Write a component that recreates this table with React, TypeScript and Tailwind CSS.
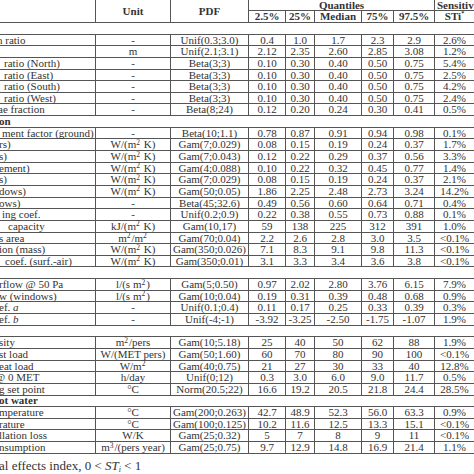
type Row = { label: string; ind: string; unit: string; pdf: string; q: string[]; s: string }
type Group = { title: string; rows: Row[] }

const groups: Group[] = [
  {
    title: '',
    rows: [
      { label: 'n ratio', ind: '-ml-[3px]', unit: '-', pdf: 'Unif(0.3;3.0)', q: ['0.4', '1.0', '1.7', '2.3', '2.9'], s: '2.6%' },
      { label: '', ind: '', unit: 'm', pdf: 'Unif(2.1;3.1)', q: ['2.12', '2.35', '2.60', '2.85', '3.08'], s: '1.2%' },
      { label: 'ratio (North)', ind: 'ml-[4px]', unit: '-', pdf: 'Beta(3;3)', q: ['0.10', '0.30', '0.40', '0.50', '0.75'], s: '5.4%' },
      { label: 'ratio (East)', ind: 'ml-[4px]', unit: '-', pdf: 'Beta(3;3)', q: ['0.10', '0.30', '0.40', '0.50', '0.75'], s: '2.5%' },
      { label: 'ratio (South)', ind: 'ml-[4px]', unit: '-', pdf: 'Beta(3;3)', q: ['0.10', '0.30', '0.40', '0.50', '0.75'], s: '4.2%' },
      { label: 'ratio (West)', ind: 'ml-[4px]', unit: '-', pdf: 'Beta(3;3)', q: ['0.10', '0.30', '0.40', '0.50', '0.75'], s: '2.4%' },
      { label: 'ae fraction', ind: '-ml-[2px]', unit: '-', pdf: 'Beta(8;24)', q: ['0.12', '0.20', '0.24', '0.30', '0.41'], s: '0.5%' },
    ],
  },
  {
    title: 'on',
    rows: [
      { label: 'ment factor (ground)', ind: 'ml-[2px]', unit: '-', pdf: 'Beta(10;1.1)', q: ['0.78', '0.87', '0.91', '0.94', '0.98'], s: '0.1%' },
      { label: 'rs)', ind: '-ml-[1px]', unit: 'W/(m² K)', pdf: 'Gam(7;0.029)', q: ['0.08', '0.15', '0.19', '0.24', '0.37'], s: '1.7%' },
      { label: 's)', ind: '-ml-[1px]', unit: 'W/(m² K)', pdf: 'Gam(7;0.043)', q: ['0.12', '0.22', '0.29', '0.37', '0.56'], s: '3.3%' },
      { label: 'ement)', ind: '-ml-[1px]', unit: 'W/(m² K)', pdf: 'Gam(4;0.088)', q: ['0.10', '0.22', '0.32', '0.45', '0.77'], s: '1.4%' },
      { label: 's)', ind: '-ml-[1px]', unit: 'W/(m² K)', pdf: 'Gam(7;0.029)', q: ['0.08', '0.15', '0.19', '0.24', '0.37'], s: '2.1%' },
      { label: 'dows)', ind: '-ml-[1px]', unit: 'W/(m² K)', pdf: 'Gam(50;0.05)', q: ['1.86', '2.25', '2.48', '2.73', '3.24'], s: '14.2%' },
      { label: 'ows)', ind: '-ml-[1px]', unit: '-', pdf: 'Beta(45;32.6)', q: ['0.49', '0.56', '0.60', '0.64', '0.71'], s: '0.4%' },
      { label: 'ing coef.', ind: 'ml-[2px]', unit: '-', pdf: 'Unif(0.2;0.9)', q: ['0.22', '0.38', '0.55', '0.73', '0.88'], s: '0.1%' },
      { label: 'capacity', ind: 'ml-[8px]', unit: 'kJ/(m² K)', pdf: 'Gam(10,17)', q: ['59', '138', '225', '312', '391'], s: '1.0%' },
      { label: 's area', ind: '-ml-[1px]', unit: 'm²/m²', pdf: 'Gam(70;0.04)', q: ['2.2', '2.6', '2.8', '3.0', '3.5'], s: '<0.1%' },
      { label: 'ion (mass)', ind: '-ml-[1px]', unit: 'W/(m² K)', pdf: 'Gam(350;0.026)', q: ['7.1', '8.3', '9.1', '9.8', '11.3'], s: '<0.1%' },
      { label: 'coef. (surf.-air)', ind: 'ml-[5px]', unit: 'W/(m² K)', pdf: 'Gam(350;0.01)', q: ['3.1', '3.3', '3.4', '3.6', '3.8'], s: '<0.1%' },
    ],
  },
  {
    title: '',
    rows: [
      { label: 'rflow @ 50 Pa', ind: '-ml-[1px]', unit: 'l/(s m²)', pdf: 'Gam(5;0.50)', q: ['0.97', '2.02', '2.80', '3.76', '6.15'], s: '7.9%' },
      { label: 'w (windows)', ind: '-ml-[1px]', unit: 'l/(s m²)', pdf: 'Gam(10;0.04)', q: ['0.19', '0.31', '0.39', '0.48', '0.68'], s: '0.9%' },
      { label: 'ef. ', ind: '-ml-[1px]', unit: '-', pdf: 'Unif(0.1;0.4)', q: ['0.11', '0.17', '0.25', '0.33', '0.39'], s: '0.3%' },
      { label: 'ef. ', ind: '-ml-[1px]', unit: '-', pdf: 'Unif(-4;-1)', q: ['-3.92', '-3.25', '-2.50', '-1.75', '-1.07'], s: '1.9%' },
    ],
  },
  {
    title: '',
    rows: [
      { label: 'sity', ind: '-ml-[1px]', unit: 'm²/pers', pdf: 'Gam(10;5.18)', q: ['25', '40', '50', '62', '88'], s: '1.9%' },
      { label: 'st load', ind: '-ml-[1px]', unit: 'W/(MET pers)', pdf: 'Gam(50;1.60)', q: ['60', '70', '80', '90', '100'], s: '<0.1%' },
      { label: 'eat load', ind: '-ml-[1px]', unit: 'W/m²', pdf: 'Gam(40;0.75)', q: ['21', '27', '30', '33', '40'], s: '12.8%' },
      { label: '@ 0 MET', ind: '-ml-[5px]', unit: 'h/day', pdf: 'Unif(0;12)', q: ['0.3', '3.0', '6.0', '9.0', '11.7'], s: '0.5%' },
      { label: 'g set point', ind: '-ml-[1px]', unit: '°C', pdf: 'Norm(20.5;22)', q: ['16.6', '19.2', '20.5', '21.8', '24.4'], s: '28.5%' },
    ],
  },
  {
    title: 'ot water',
    rows: [
      { label: 'mperature', ind: '-ml-[1px]', unit: '°C', pdf: 'Gam(200;0.263)', q: ['42.7', '48.9', '52.3', '56.0', '63.3'], s: '0.9%' },
      { label: 'rature', ind: '-ml-[1px]', unit: '°C', pdf: 'Gam(100;0.125)', q: ['10.2', '11.6', '12.5', '13.3', '15.1'], s: '<0.1%' },
      { label: 'llation loss', ind: '-ml-[1px]', unit: 'W/K', pdf: 'Gam(25;0.32)', q: ['5', '7', '8', '9', '11'], s: '<0.1%' },
      { label: 'nsumption', ind: '-ml-[1px]', unit: 'm³/(pers year)', pdf: 'Gam(25;0.75)', q: ['9.7', '12.9', '14.8', '16.9', '21.4'], s: '1.1%' },
    ],
  },
]

const cols = 'grid grid-cols-[96px_75px_78px_37px_29px_47px_32px_41px_40px_60px]'
const line = 'border-[#555]'
const cell = 'border-r border-[#555] flex items-center justify-center whitespace-nowrap'

// unit strings carry ² / ³; draw them as raised small digits like the LaTeX source
function Unit({ text }: { text: string }) {
  const parts = text.split(/([²³])/)
  return (
    <span>
      {parts.map((p, i) =>
        p === '²' || p === '³' ? (
          <span key={i} className="relative -top-[3.5px] text-[7.5px] mr-[1px]">
            {p === '²' ? '2' : '3'}
          </span>
        ) : (
          <span key={i}>{p}</span>
        ),
      )}
    </span>
  )
}

function DataRow({ r, italic }: { r: Row; italic?: string }) {
  return (
    <div className={`${cols} h-[11.65px] border-b ${line}`}>
      <div className={`border-r ${line} flex items-center whitespace-nowrap overflow-hidden`}>
        <span className={r.ind}>
          {r.label}
          {italic && <i>{italic}</i>}
        </span>
      </div>
      <div className={cell}>
        <Unit text={r.unit} />
      </div>
      <div className={cell}>{r.pdf}</div>
      {r.q.map((v, i) => (
        <div key={i} className={cell}>{v}</div>
      ))}
      <div className={cell}>{r.s}</div>
      <div />
    </div>
  )
}

export default function App() {
  return (
    <div className="w-[474px] h-[474px] overflow-hidden bg-white text-[#333] text-[11px] leading-none font-['Liberation_Serif',serif]">
      <div className="w-[535px]">
        {/* header */}
        <div className={`${cols} grid-rows-[10.5px_11.5px] border-b ${line}`}>
          <div className={`row-span-2 border-r ${line}`} />
          <div className={`${cell} row-span-2 font-bold`}>Unit</div>
          <div className={`${cell} row-span-2 font-bold`}>PDF</div>
          <div className={`${cell} col-span-5 border-b font-bold pt-[1px]`}>Quantiles</div>
          <div className={`col-span-2 border-b ${line} flex items-center pl-[2px] pt-[1px] font-bold whitespace-nowrap overflow-hidden`}>
            Sensitivity
          </div>
          {['2.5%', '25%', 'Median', '75%', '97.5%'].map((h) => (
            <div key={h} className={`${cell} font-bold`}>{h}</div>
          ))}
          <div className={`${cell} font-bold`}>
            STi<sup className="text-[6px]">*</sup>
          </div>
          <div />
        </div>

        {groups.map((g, gi) => (
          <div key={gi}>
            <div className={`h-[11.65px] border-b ${line} flex items-center font-bold whitespace-nowrap`}>
              <span className="-ml-[1px]">{g.title}</span>
            </div>
            {g.rows.map((r, ri) => (
              <DataRow
                key={ri}
                r={r}
                italic={gi === 2 && ri === 2 ? 'a' : gi === 2 && ri === 3 ? 'b' : undefined}
              />
            ))}
          </div>
        ))}

        <div className="pt-[5px] text-[13px] leading-[14px] whitespace-nowrap -ml-[1px]">
          al effects index, 0 &lt; <i>ST</i>
          <sub className="text-[8px]">
            <i>i</i>
          </sub>{' '}
          &lt; 1
        </div>
      </div>
    </div>
  )
}
